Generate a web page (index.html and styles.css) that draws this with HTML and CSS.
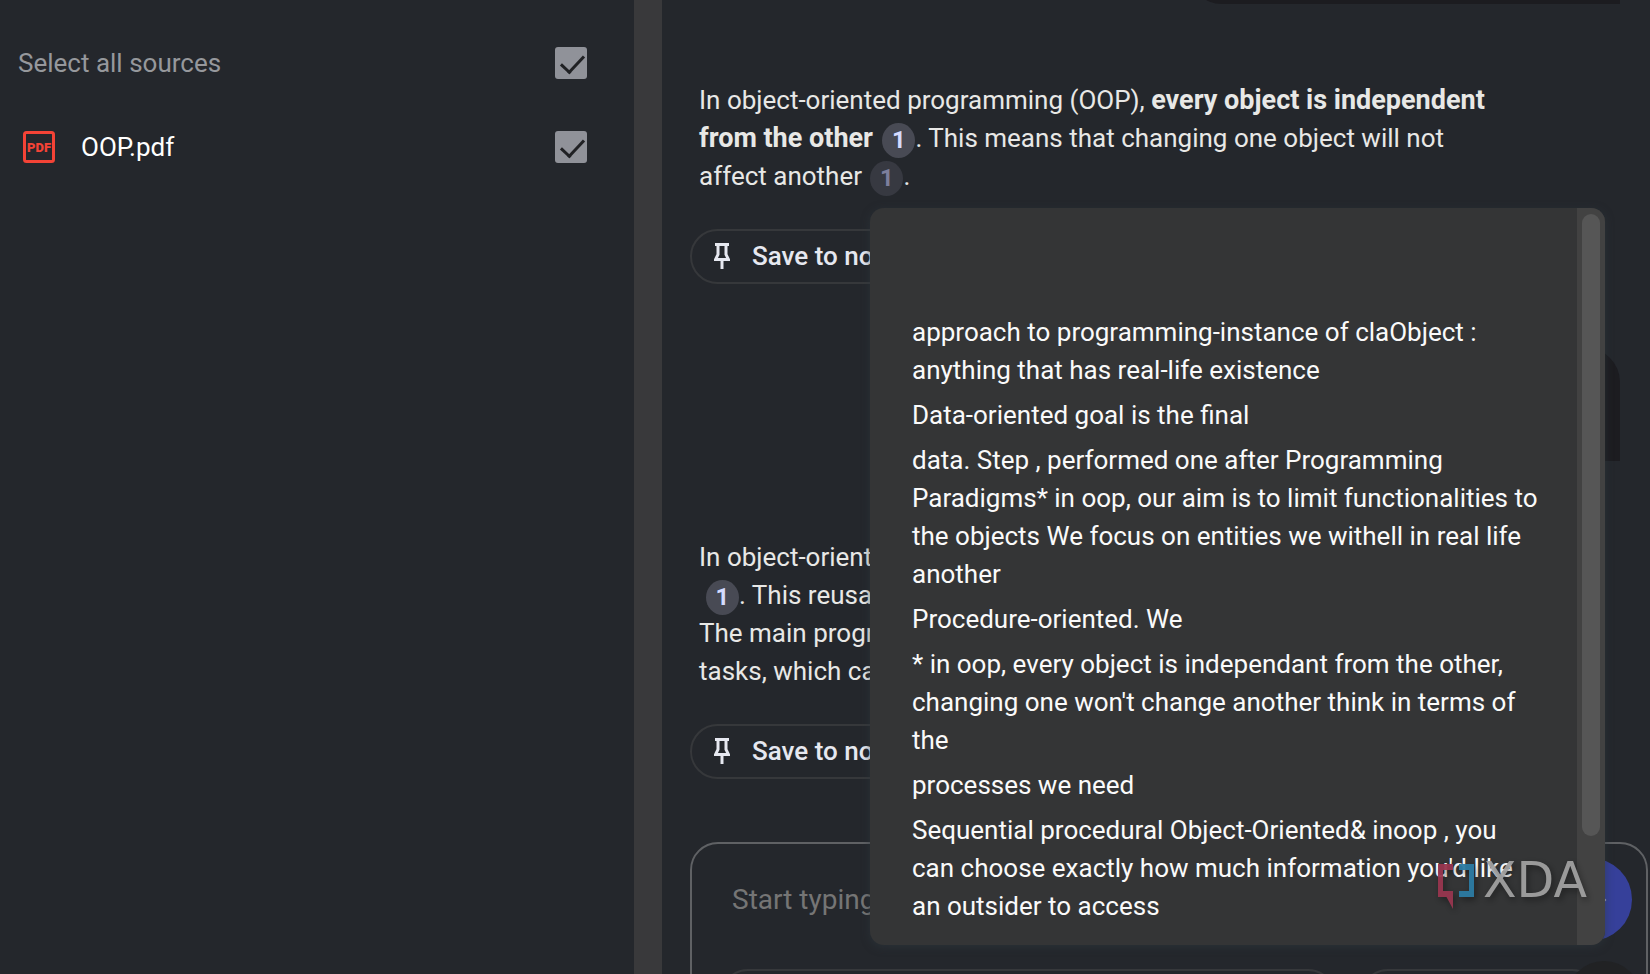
FILE: index.html
```html
<!DOCTYPE html>
<html lang="en">
<head>
    <meta charset="UTF-8">
    <meta name="viewport" content="width=device-width, initial-scale=1.0">
    <title>Notebook</title>
    <link rel="stylesheet" href="styles.css">
</head>
<body>
    <!-- Sources -->
    <aside class="sources">
        <label class="source-row">
            <span class="source-all">Select all sources</span>
            <input type="checkbox" class="check" checked>
        </label>
        <label class="source-row">
            <svg class="pdf-icon" viewBox="0 0 32 32" aria-hidden="true">
                <rect x="1.5" y="1.5" width="29" height="29" rx="2" fill="none" stroke="#f44336" stroke-width="3"/>
                <text x="16" y="21" text-anchor="middle">PDF</text>
            </svg>
            <span class="source-name">OOP.pdf</span>
            <input type="checkbox" class="check" checked>
        </label>
    </aside>

    <div class="divider"></div>

    <!-- Chat -->
    <main class="chat">
        <div class="bubble bubble-first"></div>

        <p class="message">
            In object-oriented programming (OOP), <b>every object is independent<br>
            from the other</b> <button class="cite">1</button>. This means that changing one object will not<br>
            affect another <button class="cite cite-active">1</button>.
        </p>
        <button class="save">
            <svg viewBox="0 0 16 26" aria-hidden="true">
                <path d="M1 1.5h14M4 2v9.500L1.500 16.500h13L12 11.500V2M8 17v9"/>
            </svg>
            Save to note
        </button>

        <div class="bubble"></div>

        <p class="message">
            In object-oriented<br>
            <button class="cite">1</button>. This reusa<br>
            The main progr<br>
            tasks, which ca
        </p>
        <button class="save">
            <svg viewBox="0 0 16 26" aria-hidden="true">
                <path d="M1 1.5h14M4 2v9.500L1.500 16.500h13L12 11.500V2M8 17v9"/>
            </svg>
            Save to note
        </button>

        <form class="composer">
            <div class="composer-row">
                <input type="text" class="prompt" placeholder="Start typing..." aria-label="Message">
                <button type="button" class="send" aria-label="Send">
                    <svg viewBox="0 0 32 32" aria-hidden="true">
                        <path d="M1 16h29M18 4l12 12-12 12"/>
                    </svg>
                </button>
            </div>
            <div class="suggestions">
                <button type="button" class="suggestion suggestion-wide" aria-label="Suggestion"></button>
                <button type="button" class="suggestion" aria-label="Suggestion"></button>
            </div>
            <button type="button" class="next" aria-label="Next"></button>
        </form>

        <!-- Citation popup -->
        <div class="popup">
            <div class="popup-text">
                <p>approach to programming-instance of claObject :<br>anything that has real-life existence</p>
                <p>Data-oriented goal is the final</p>
                <p>data. Step , performed one after Programming<br>Paradigms* in oop, our aim is to limit functionalities to<br>the objects We focus on entities we withell in real life<br>another</p>
                <p>Procedure-oriented. We</p>
                <p>* in oop, every object is independant from the other,<br>changing one won't change another think in terms of<br>the</p>
                <p>processes we need</p>
                <p>Sequential procedural Object-Oriented&amp; inoop , you<br>can choose exactly how much information you'd like<br>an outsider to access</p>
            </div>
            <div class="track"><div class="thumb"></div></div>
        </div>

        <!-- Watermark -->
        <div class="watermark">
            <svg viewBox="0 0 36 45" aria-hidden="true">
                <path fill="#98364f" d="M0 0h15v6H5v21h10v18L8.500 33H0z"/>
                <path fill="#2c7ba3" d="M21 0h15v33H21v-6h10V6H21z"/>
            </svg>
            <span>XDA</span>
        </div>
    </main>
</body>
</html>
```
FILE: styles.css
```css
:root {
    --bg: #24272c;
    --panel: #343536;
    --text: #e8e8e6;
}

* {
    margin: 0;
    padding: 0;
    box-sizing: border-box;
}

body {
    display: flex;
    height: 100vh;
    overflow: hidden;
    background: var(--bg);
    color: var(--text);
    font-family: Roboto, "Liberation Sans", sans-serif;
    font-size: 26px;
    line-height: 38px;
}

button,
input {
    font: inherit;
    color: inherit;
    border: none;
    background: none;
}

/* Sources */
.sources {
    flex: 0 1 634px;
    padding: 44px 47px 0 18px;
}

.source-row {
    display: flex;
    align-items: center;
    height: 38px;
    margin-bottom: 46px;
}

.source-all {
    color: #96989c;
}

.source-name {
    color: #fff;
}

.pdf-icon {
    width: 32px;
    height: 32px;
    margin: 0 26px 0 5px;
}

.pdf-icon text {
    fill: #f44336;
    font-size: 13px;
    font-weight: 900;
}

.check {
    position: relative;
    appearance: none;
    width: 32px;
    height: 32px;
    margin-left: auto;
    border-radius: 3px;
    background: #909299;
}

.check:checked::after {
    content: "";
    position: absolute;
    left: 11px;
    top: 3px;
    width: 10px;
    height: 20px;
    border: solid #202124;
    border-width: 0 3px 3px 0;
    transform: rotate(43deg);
}

.divider {
    flex: 0 0 28px;
    background: #39393b;
}

/* Chat */
.chat {
    position: relative;
    flex: 1;
    display: flex;
    flex-direction: column;
    align-items: flex-start;
    padding-left: 28px;
    overflow: hidden;
}

.bubble {
    flex: none;
    align-self: flex-end;
    width: 432px;
    height: 113px;
    margin: 64px 30px 0 0;
    border-radius: 34px 34px 0 34px;
    background: #1c1c20;
}

.bubble-first {
    margin-top: -109px;
}

.message {
    margin-top: 77px;
    padding-left: 9px;
    white-space: nowrap;
}

.message b {
    font-size: 27px;
    line-height: 36px;
}

.cite {
    width: 33px;
    height: 35px;
    margin: -3px 0 -3px 3px;
    border-radius: 50%;
    background: #484a54;
    color: #d5dbff;
    font-size: 24px;
    font-weight: 700;
    line-height: 35px;
    vertical-align: middle;
}

.message br + .cite {
    margin-left: 7px;
}

.message .cite-active {
    margin-left: 2px;
    background: #373941;
    color: #7d7f9c;
}

.message br + .cite-active {
    margin-left: 2px;
}

.save {
    display: flex;
    flex: none;
    align-items: center;
    gap: 22px;
    height: 55px;
    margin-top: 34px;
    padding: 0 24px 2px 22px;
    border: 2px solid #36383b;
    border-radius: 28px;
    color: #e6e8f0;
    font-weight: 500;
}

.save svg {
    width: 16px;
    height: 26px;
    fill: none;
    stroke: currentColor;
    stroke-width: 3;
}

/* Composer */
.composer {
    position: relative;
    flex: none;
    align-self: stretch;
    height: 240px;
    margin: 63px 2px 0 0;
    padding: 14px 14px 0 36px;
    border: 2px solid #5f6164;
    border-radius: 28px;
}

.composer-row {
    display: flex;
    align-items: center;
}

.prompt {
    flex: 1;
    padding-left: 4px;
    font-size: 28px;
}

.prompt::placeholder {
    color: #757575;
    opacity: 1;
}

.send {
    display: grid;
    place-items: center;
    width: 83px;
    height: 83px;
    border-radius: 50%;
    background: #36409a;
}

.send svg {
    width: 32px;
    height: 32px;
    fill: none;
    stroke: #a5a9cc;
    stroke-width: 2;
}

.suggestions {
    display: flex;
    gap: 24px;
    margin: 28px 0 0 -8px;
}

.suggestion {
    width: 240px;
    height: 56px;
    border: 2px solid #36383b;
    border-radius: 28px;
}

.suggestion-wide {
    width: 616px;
}

.next {
    position: absolute;
    right: 5px;
    top: 117px;
    width: 74px;
    height: 74px;
    border-radius: 50%;
    background: #212224;
}

/* Citation popup */
.popup {
    position: absolute;
    left: 208px;
    right: 45px;
    top: 208px;
    display: flex;
    overflow: hidden;
    border-radius: 14px;
    background: var(--panel);
    box-shadow: 0 2px 8px rgba(45, 55, 62, 0.6);
    color: #fafafa;
}

.popup-text {
    flex: 1;
    padding: 105px 0 20px 42px;
    white-space: nowrap;
}

.popup-text p + p {
    margin-top: 7px;
}

.track {
    width: 28px;
    padding: 6px 5px;
    background: #424242;
}

.thumb {
    height: 622px;
    border-radius: 9px;
    background: #565656;
}

/* Watermark */
.watermark {
    position: absolute;
    right: 63px;
    top: 864px;
    display: flex;
    gap: 9px;
    filter: drop-shadow(2px 3px 3px rgba(0, 0, 0, 0.4));
    opacity: 0.95;
}

.watermark svg {
    width: 36px;
    height: 45px;
}

.watermark span {
    color: #a0a0a0;
    font: 49px/34px "DejaVu Sans", sans-serif;
}
```
